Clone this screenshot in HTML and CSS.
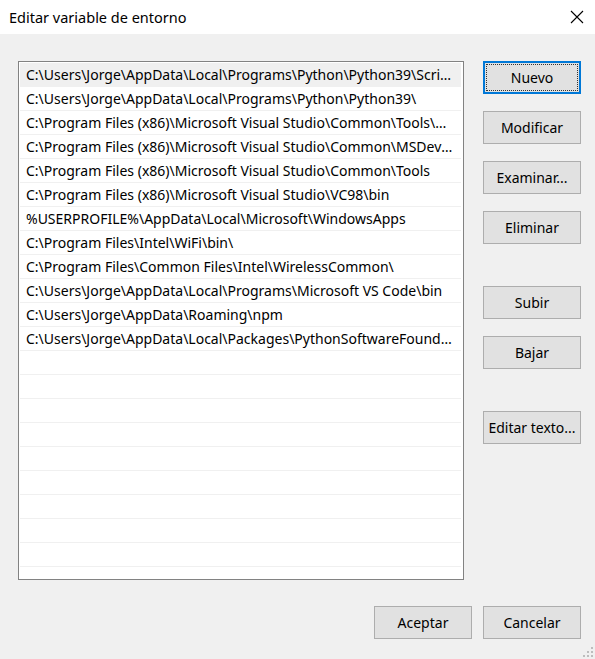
FILE: index.html
```html
<!DOCTYPE html>
<html lang="es">
<head>
    <meta charset="UTF-8">
    <title>Editar variable de entorno</title>
    <link rel="stylesheet" href="styles.css">
</head>
<body>

<div class="dialog">
    <div class="titlebar">
        <span class="title">Editar variable de entorno</span>
        <svg class="close" width="14" height="14" viewBox="0 0 14 14">
            <path d="M1 1 L13 13 M13 1 L1 13" stroke="#000" stroke-width="1.1" fill="none"/>
        </svg>
    </div>

    <div class="content">
        <div class="main">
            <div class="list">
                <div class="row selected">C:\Users\Jorge\AppData\Local\Programs\Python\Python39\Scripts\</div>
                <div class="row">C:\Users\Jorge\AppData\Local\Programs\Python\Python39\</div>
                <div class="row">C:\Program Files (x86)\Microsoft Visual Studio\Common\Tools\WinNT</div>
                <div class="row">C:\Program Files (x86)\Microsoft Visual Studio\Common\MSDev98\Bin</div>
                <div class="row">C:\Program Files (x86)\Microsoft Visual Studio\Common\Tools</div>
                <div class="row">C:\Program Files (x86)\Microsoft Visual Studio\VC98\bin</div>
                <div class="row">%USERPROFILE%\AppData\Local\Microsoft\WindowsApps</div>
                <div class="row">C:\Program Files\Intel\WiFi\bin\</div>
                <div class="row">C:\Program Files\Common Files\Intel\WirelessCommon\</div>
                <div class="row">C:\Users\Jorge\AppData\Local\Programs\Microsoft VS Code\bin</div>
                <div class="row">C:\Users\Jorge\AppData\Roaming\npm</div>
                <div class="row">C:\Users\Jorge\AppData\Local\Packages\PythonSoftwareFoundation.Python.3.9</div>
                <div class="row"></div>
                <div class="row"></div>
                <div class="row"></div>
                <div class="row"></div>
                <div class="row"></div>
                <div class="row"></div>
                <div class="row"></div>
                <div class="row"></div>
                <div class="row"></div>
            </div>

            <div class="side">
                <button class="btn default"><span class="focus">Nuevo</span></button>
                <button class="btn">Modificar</button>
                <button class="btn">Examinar...</button>
                <button class="btn">Eliminar</button>
                <button class="btn gap-big">Subir</button>
                <button class="btn">Bajar</button>
                <button class="btn gap-big">Editar texto...</button>
            </div>
        </div>

        <div class="footer">
            <button class="btn">Aceptar</button>
            <button class="btn">Cancelar</button>
        </div>
    </div>

    <svg class="grip" width="12" height="12" viewBox="0 0 12 12">
        <rect x="9" y="1" width="2" height="2" fill="#bdbdbd"/>
        <rect x="5" y="5" width="2" height="2" fill="#bdbdbd"/>
        <rect x="9" y="5" width="2" height="2" fill="#bdbdbd"/>
        <rect x="1" y="9" width="2" height="2" fill="#bdbdbd"/>
        <rect x="5" y="9" width="2" height="2" fill="#bdbdbd"/>
        <rect x="9" y="9" width="2" height="2" fill="#bdbdbd"/>
    </svg>
</div>

</body>
</html>
```

FILE: styles.css
```css
* {
    box-sizing: border-box;
    margin: 0;
    padding: 0;
}
body {
    width: 595px;
    height: 659px;
    overflow: hidden;
    font-family: "Noto Sans", "Open Sans", Arial, sans-serif;
    font-size: 14px;
    color: #000;
    background-color: #f0f0f0;
}
.dialog {
    position: relative;
    height: 659px;
    display: flex;
    flex-direction: column;
}
.titlebar {
    height: 34px;
    background-color: #fff;
    display: flex;
    align-items: center;
    justify-content: space-between;
    padding: 0 11px 0 9px;
}
.title {
    font-size: 14.5px;
    color: #000;
}
.close {
    display: block;
    margin-top: -1px;
}
.content {
    flex: 1;
    display: flex;
    flex-direction: column;
    padding: 27px 14px 0 18px;
}
.main {
    display: flex;
    gap: 19px;
}
.list {
    width: 447px;
    height: 519px;
    background-color: #fff;
    border: 1px solid #828282;
    padding: 1px 2px 0 1px;
    overflow: hidden;
}
.row {
    height: 24px;
    line-height: 23px;
    padding-left: 6px;
    padding-right: 6px;
    border-bottom: 1px solid #f0f0f0;
    white-space: nowrap;
    overflow: hidden;
    text-overflow: ellipsis;
}
.row.selected {
    background-color: #f0f0f0;
}
.side {
    display: flex;
    flex-direction: column;
    gap: 17px;
}
.btn {
    width: 98px;
    height: 33px;
    background-color: #e1e1e1;
    border: 1px solid #adadad;
    font-family: inherit;
    font-size: 14px;
    color: #000;
    padding: 0;
}
.btn.gap-big {
    margin-top: 25px;
}
.btn.default {
    border: 2px solid #0078d7;
    padding: 1px;
}
.focus {
    display: flex;
    align-items: center;
    justify-content: center;
    height: 100%;
    border: 1px dotted #333;
}
.footer {
    display: flex;
    justify-content: flex-end;
    gap: 11px;
    margin-top: 26px;
}
.grip {
    position: absolute;
    right: 1px;
    bottom: 1px;
}
```
